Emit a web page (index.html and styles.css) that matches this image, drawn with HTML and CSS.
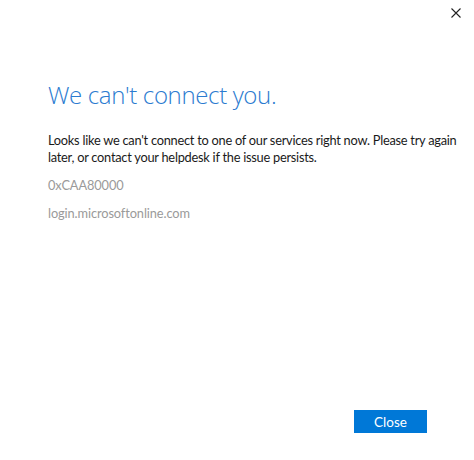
FILE: index.html
```html
<!DOCTYPE html>
<html>
<head>
<meta charset="utf-8">
<link rel="stylesheet" href="styles.css">
</head>
<body>
<div class="dialog">
  <div class="titlebar">
    <button class="x" aria-label="Close">
      <svg width="10" height="10" viewBox="0 0 10 10"><path d="M0.5 0.5 L9.5 9.5 M9.5 0.5 L0.5 9.5" stroke="#222" stroke-width="1.1" fill="none"/></svg>
    </button>
  </div>
  <div class="content">
    <h1 class="title">We can't connect you.</h1>
    <p class="msg">Looks like we can't connect to one of our services right now. Please try again later, or contact your helpdesk if the issue persists.</p>
    <p class="meta">0xCAA80000</p>
    <p class="meta">login.microsoftonline.com</p>
  </div>
  <div class="footer">
    <button class="btn">Close</button>
  </div>
</div>
</body>
</html>
```
FILE: styles.css
```css
html, body {
  margin: 0;
  padding: 0;
  background: #fff;
}
.dialog {
  width: 474px;
  height: 460px;
  display: flex;
  flex-direction: column;
  font-family: "Lato", "Open Sans", sans-serif;
  box-sizing: border-box;
}
.titlebar {
  height: 30px;
  display: flex;
  justify-content: flex-end;
}
.x {
  width: 30px;
  height: 26px;
  margin-right: 3px;
  border: 0;
  background: transparent;
  padding: 0;
  display: flex;
  align-items: center;
  justify-content: center;
}
.content {
  flex: 1;
  padding: 48px 12px 0 48px;
}
.title {
  margin: 0 0 20px 0;
  font-family: "Open Sans", sans-serif;
  font-weight: 300;
  font-size: 24px;
  line-height: 34px;
  color: #2b7bd0;
  letter-spacing: -0.35px;
}
.msg {
  margin: 0 0 11px 0;
  font-size: 12.8px;
  line-height: 17px;
  color: #1a1a1a;
  letter-spacing: -0.25px;
}
.meta {
  margin: 0 0 11px 0;
  font-size: 12.8px;
  line-height: 17px;
  color: #9a9a9a;
  letter-spacing: -0.1px;
}
.footer {
  display: flex;
  justify-content: flex-end;
  padding: 0 47px 27px 0;
}
.btn {
  width: 73px;
  height: 23px;
  border: 0;
  background: #0078d7;
  color: #fff;
  font-family: "Lato", "Open Sans", sans-serif;
  font-size: 13.5px;
  padding: 0;
}
```
